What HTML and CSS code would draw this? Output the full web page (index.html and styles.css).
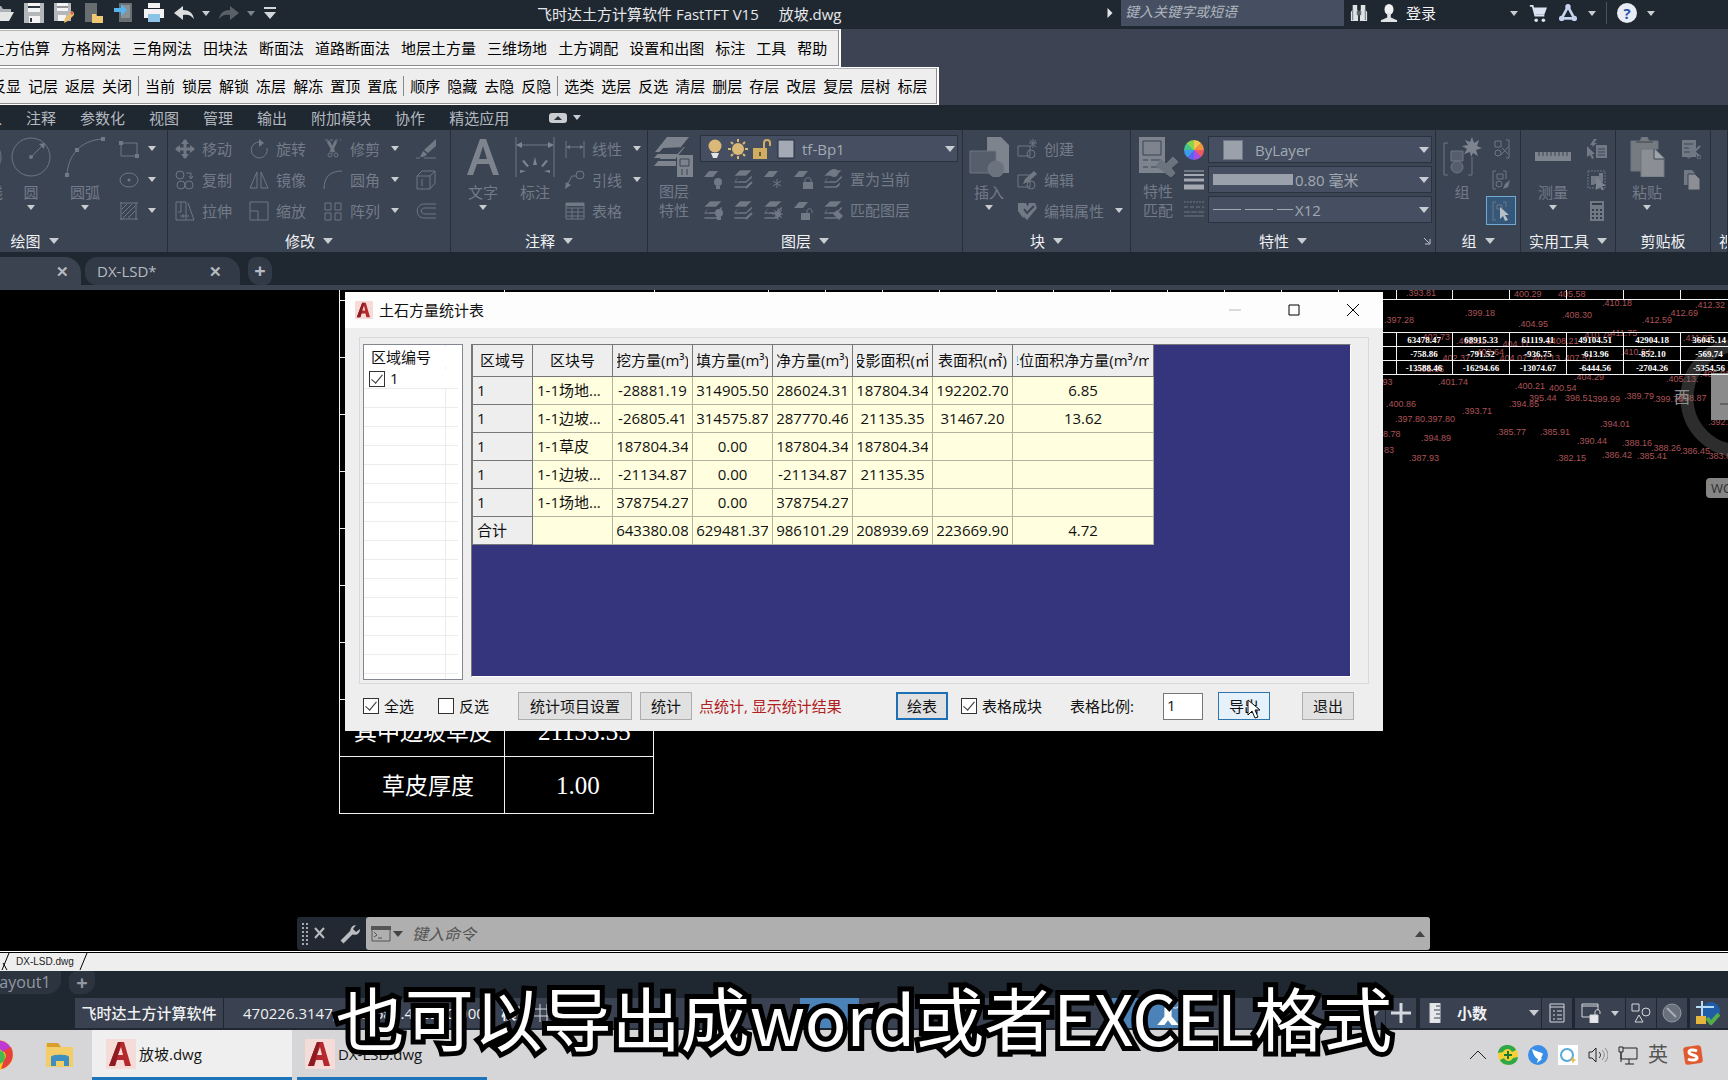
FILE: index.html
```html
<!DOCTYPE html>
<html lang="zh-CN">
<head>
    <meta charset="UTF-8">
    <meta name="viewport" content="width=device-width, initial-scale=1.0">
    <title>飞时达土方计算软件 FastTFT V15</title>
    <link rel="stylesheet" href="styles.css">
</head>
<body>
    <svg class="defs" aria-hidden="true">
        <symbol id="layers" viewBox="0 0 20 20"><path d="M7 1h12l-6 6H1zM6 7l-5 5h12l6-6v3l-6 5H1M6 12l-5 5h12l4-4v3l-3 3H1v-2" fill="currentColor" stroke="#3b4453" stroke-width=".6"/></symbol>
        <symbol id="sheet" viewBox="0 0 20 20"><path d="M6 2h9l-5 6H1z" fill="currentColor"/></symbol>
        <symbol id="acad" viewBox="0 0 30 30"><rect width="30" height="30" fill="#f6dcd8"/><path d="M3 27 12 3h6l7 24h-6l-1.500-6H11l-2 6zM12 16h5l-2-8z" fill="#b5282d"/><path d="M3 27 12 3h3L9 27z" fill="#8d1b22"/></symbol>
    </svg>

    <header class="titlebar">
        <div class="quick">
            <svg viewBox="0 0 20 20" class="open"><path d="M0 3h7l2 3h8v3H5L1 18H0z" fill="#aeb2b6"/><path d="M5 9h15l-5 9H0z" fill="#e4e5e5"/></svg>
            <svg viewBox="0 0 20 20"><path d="M0 0h20v20H0z" fill="#b4b8bb"/><path d="M4 0h12v9H4zM5 13h11v7H5z" fill="#f4f4f4"/><path d="M4 4h12M7 15v4" stroke="#30383f" stroke-width="2"/></svg>
            <svg viewBox="0 0 20 20"><path d="M0 0h17v18H0z" fill="#b4b8bb"/><path d="M3 0h11v8H3zM4 12h8v6H4z" fill="#f4f4f4"/><path d="M3 4h11" stroke="#30383f"/><path d="m10 20 1-5 7-7 3 3-7 7z" fill="#e9bd6d"/><path d="m16 10 2-2 2 2-2 2z" fill="#d36a54"/></svg>
            <svg viewBox="0 0 20 20"><path d="M1 0h12v19H1z" fill="#686d70"/><path d="M8 11h4l1 2h6v7H8z" fill="#f0c874"/></svg>
            <svg viewBox="0 0 20 20"><path d="M5 0h13v19H5z" fill="#696f73"/><path d="M7 2h9v13H7z" fill="#8a9195"/><path d="M0 5h7V1l6 6-6 6V9H0z" fill="#57b4ec"/></svg>
            <svg viewBox="0 0 20 20"><path d="M4 0h12v5H4zM0 6h20v9H0z" fill="#f2f2f2"/><path d="M4 11h12v8H4z" fill="#8cc4e8"/></svg>
            <svg viewBox="0 0 20 20"><path d="M0 10 9 3v4c6 0 10 3 11 9-3-4-6-5-11-4v5z" fill="#dcdedf"/></svg>
            <i class="caret"></i>
            <svg viewBox="0 0 20 20"><path d="M20 10 11 3v4C5 7 1 10 0 16c3-4 6-5 11-4v5z" fill="#596068"/></svg>
            <i class="caret dim"></i>
            <svg viewBox="0 0 20 20" class="more"><path d="M4 4h12v2H4zM4 9h12l-6 7z" fill="#d4d7da"/></svg>
        </div>
        <h1>飞时达土方计算软件 FastTFT V15 <span>放坡.dwg</span></h1>
        <div class="account">
            <svg viewBox="0 0 8 12" class="tri"><path d="M1 0v12l6-6z" fill="#e2e4e6"/></svg>
            <input type="text" class="search" placeholder="键入关键字或短语" aria-label="搜索">
            <svg viewBox="0 0 20 20"><path d="M3 1h5v5l1 3v10H1V9l2-3zM12 1h5v5l2 3v10h-8V9l1-3z" fill="#dfe3e6"/><path d="M8 8h4v4H8zM3 6v12M17 6v12" fill="#5b646e" stroke="#5b646e"/></svg>
            <a href="#"><svg viewBox="0 0 20 20"><ellipse cx="10" cy="6" rx="5" ry="6" fill="#f0f1f2"/><path d="M8 10h4v5l7 3v2H1v-2l7-3z" fill="#dfe3e6"/></svg>登录</a>
            <i class="caret login"></i>
            <svg viewBox="0 0 20 20"><path d="M1 2h3l3 11h10" fill="none" stroke="#dbe3f3" stroke-width="2"/><path d="M5 4h15l-3 8H7z" fill="#dbe3f3"/><circle cx="8" cy="18" r="2" fill="#dbe3f3"/><circle cx="16" cy="18" r="2" fill="#dbe3f3"/></svg>
            <svg viewBox="0 0 20 20"><path d="M10 3 3 16h14z" fill="none" stroke="#c5d3ef" stroke-width="3"/><circle cx="10" cy="3" r="3" fill="#c5d3ef"/><circle cx="3" cy="16" r="3" fill="#c5d3ef"/><circle cx="17" cy="16" r="3" fill="#c5d3ef"/></svg>
            <i class="caret"></i>
            <span class="vline"></span>
            <span class="help">?</span>
            <i class="caret"></i>
        </div>
    </header>

    <nav class="menus">
        <div class="menu main-menu">
            <a href="#">土方估算</a><a href="#">方格网法</a><a href="#">三角网法</a><a href="#">田块法</a><a href="#">断面法</a><a href="#">道路断面法</a><a href="#">地层土方量</a><a href="#">三维场地</a><a href="#">土方调配</a><a href="#">设置和出图</a><a href="#">标注</a><a href="#">工具</a><a href="#">帮助</a>
        </div>
        <div class="menu layer-menu">
            <div><a href="#">反显</a><a href="#">记层</a><a href="#">返层</a><a href="#">关闭</a></div>
            <div><a href="#">当前</a><a href="#">锁层</a><a href="#">解锁</a><a href="#">冻层</a><a href="#">解冻</a><a href="#">置顶</a><a href="#">置底</a></div>
            <div><a href="#">顺序</a><a href="#">隐藏</a><a href="#">去隐</a><a href="#">反隐</a></div>
            <div><a href="#">选类</a><a href="#">选层</a><a href="#">反选</a><a href="#">清层</a><a href="#">删层</a><a href="#">存层</a><a href="#">改层</a><a href="#">复层</a><a href="#">层树</a><a href="#">标层</a></div>
        </div>
    </nav>

    <nav class="ribbon-tabs">
        <a href="#">插入</a><a href="#">注释</a><a href="#">参数化</a><a href="#">视图</a><a href="#">管理</a><a href="#">输出</a><a href="#">附加模块</a><a href="#">协作</a><a href="#">精选应用</a>
        <svg viewBox="0 0 18 10"><rect width="18" height="10" rx="3" fill="#c9ccd0"/><path d="m5 7 4-4 4 4z" fill="#2b333d"/></svg>
        <i class="caret"></i>
    </nav>

    <section class="ribbon">
        <div class="panel draw">
            <div class="tools">
                <button class="big cut"><svg viewBox="0 0 40 40"><circle cx="20" cy="20" r="18"/></svg>线</button>
                <button class="big"><svg viewBox="0 0 40 40"><circle cx="20" cy="20" r="19"/><path d="m20 20 12-12"/><circle cx="20" cy="20" r="2" class="f"/><path d="m34 6-1 6-5-5z" class="f"/></svg>圆<i class="caret"></i></button>
                <button class="big"><svg viewBox="0 0 40 40"><path d="M2 38C3 19 15 3 38 2"/><path d="M0 36h4v4H0zM10 11h4v4h-4zM36 0h4v4h-4z" class="f"/></svg>圆弧<i class="caret"></i></button>
                <div class="stack icons">
                    <button><svg viewBox="0 0 20 20"><path d="M2 4h16v13H2z"/><path d="M0 2h4v4H0zM16 15h4v4h-4z" class="f"/></svg><i class="caret"></i></button>
                    <button><svg viewBox="0 0 20 20"><ellipse cx="10" cy="10" rx="9" ry="7"/><circle cx="10" cy="10" r="1.500" class="f"/></svg><i class="caret"></i></button>
                    <button><svg viewBox="0 0 20 20"><path d="M1 2h18M1 18h18M2 1v18M17 1v18M3 8l5-5M3 13 13 3M4 17 16 5M9 17l7-7"/></svg><i class="caret"></i></button>
                </div>
            </div>
            <h2>绘图<i class="caret"></i></h2>
        </div>

        <div class="panel modify">
            <div class="tools">
                <div class="stack">
                    <button><svg viewBox="0 0 20 20"><path d="M10 1v18M1 10h18" stroke-width="3"/><path d="m10 0 4 5H6zM10 20l4-5H6zM0 10l5-4v8zM20 10l-5-4v8z" class="f"/></svg>移动</button>
                    <button><svg viewBox="0 0 20 20"><circle cx="5" cy="5" r="4"/><circle cx="6" cy="15" r="4"/><circle cx="14" cy="15" r="4"/><path d="M11 3h5v5M14 6l2 3 2-3"/></svg>复制</button>
                    <button><svg viewBox="0 0 20 20"><path d="M1 1h10v18H1zM13 2l6 17h-8M6 1v10H3m11 4H5m3-2v4"/></svg>拉伸</button>
                </div>
                <div class="stack">
                    <button><svg viewBox="0 0 20 20"><path d="M11 3a8 8 0 1 0 7 6"/><path d="m10 0 5 4-5 4z" class="f"/></svg>旋转</button>
                    <button><svg viewBox="0 0 20 20"><path d="M8 2v16H1zM12 2v16h7z"/></svg>镜像</button>
                    <button><svg viewBox="0 0 20 20"><path d="M1 1h18v18H1zM1 10h8v9"/></svg>缩放</button>
                </div>
                <div class="stack">
                    <button><svg viewBox="0 0 20 20"><path d="M2 1h16" stroke-dasharray="3 2"/><path d="M5 2l6 11M13 2 8 13" stroke-width="3"/><circle cx="7" cy="16" r="2"/><circle cx="13" cy="16" r="2"/></svg>修剪<i class="caret"></i></button>
                    <button><svg viewBox="0 0 20 20"><path d="M1 19C1 7 7 1 19 1"/></svg>圆角<i class="caret"></i></button>
                    <button><svg viewBox="0 0 20 20"><path d="M2 2h6v7H2zM12 2h6v7h-6zM2 12h6v7H2zM12 12h6v7h-6z"/></svg>阵列<i class="caret"></i></button>
                </div>
                <div class="stack">
                    <button><svg viewBox="0 0 20 20"><path d="M20 0 8 11l4 3 8-7zM7 12l4 3c-2 3-5 3-7 3z" class="f"/><path d="M0 19h4M8 19h12"/></svg></button>
                    <button><svg viewBox="0 0 20 20"><path d="M1 6h13v13H1zM1 6l5-5h13l-5 5M19 1v12l-5 6M6 9v7"/></svg></button>
                    <button><svg viewBox="0 0 20 20"><path d="M20 3H8C-1 3-1 17 8 17h12M20 7H9c-5 0-5 6 0 6h11"/></svg></button>
                </div>
            </div>
            <h2>修改<i class="caret"></i></h2>
        </div>

        <div class="panel annotate">
            <div class="tools">
                <button class="big"><svg viewBox="0 0 40 40"><path d="M4 38 17 2h6l13 36h-6l-4-11H14l-4 11zM16 22h8L20 9z" class="lt"/></svg>文字<i class="caret"></i></button>
                <button class="big"><svg viewBox="0 0 40 40"><path d="M1 0v40M39 0v40M2 8h36"/><path d="m1 8 6-3v6zM39 8l-6-3v6zM18 28l2-8 2 8zM12 30l-5-6 2-1 5 6zM28 30l5-6-2-1-5 6zM11 34l-6-1v3zM29 34l6-1v3z" class="lt"/></svg>标注</button>
                <div class="stack">
                    <button><svg viewBox="0 0 20 20"><path d="M1 2v17M19 2v17M2 8h16"/><path d="m1 8 4-2v4zM19 8l-4-2v4z" class="f"/></svg>线性<i class="caret"></i></button>
                    <button><svg viewBox="0 0 20 20"><circle cx="15" cy="5" r="4"/><path d="M11 6H7L2 15"/><path d="m0 19 1-7 5 3z" class="f"/></svg>引线<i class="caret"></i></button>
                    <button><svg viewBox="0 0 20 20"><path d="M1 2h18v16H1zM1 7h18M1 11h18M1 15h18M7 7v11M13 7v11"/><path d="M1 2h18v3H1z" class="f"/></svg>表格</button>
                </div>
            </div>
            <h2>注释<i class="caret"></i></h2>
        </div>

        <div class="panel layer">
            <div class="tools">
                <button class="big two"><svg viewBox="0 0 40 40"><path d="M13 0h22L23 15H1zM9 11 0 21h22l9-11M9 18l-9 11h22v-9" class="lt"/><path d="M1 16h22L34 4M1 23h21" stroke="#3b4453" stroke-width="2"/><path d="M23 18h16v22H23z" class="lt"/><path d="M26 22h9v7h-9zM28 32v6M33 32v6" stroke="#3b4453"/></svg>图层<br>特性</button>
                <div class="layer-rows">
                    <div class="drop layer-drop">
                        <svg viewBox="0 0 88 20"><circle cx="8" cy="7" r="6.500" fill="#d9b878"/><path d="M4 14h8l-2 5H6z" fill="#e3e4e6"/><circle cx="31" cy="10" r="6" fill="#d9b878"/><path d="M31 0v3M31 17v3M21 10h3M38 10h3M24 3l2 2M36 15l2 2M24 17l2-2M36 5l2-2" stroke="#d9b878" stroke-width="2"/><path d="M46 9h14v11H46z" fill="#cfae62"/><path d="M57 9V4c0-4 6-4 6 0v3" fill="none" stroke="#cfae62" stroke-width="2"/><path d="M53 13v4" stroke="#6a5a37" stroke-width="2"/><path d="M71 1h16v18H71z" fill="#a3a9b5" stroke="#262f3b"/></svg>
                        <select aria-label="图层"><option>tf-Bp1</option></select>
                    </div>
                    <div class="row">
                        <svg viewBox="0 0 20 20"><use href="#sheet"/><circle cx="15" cy="13" r="4" class="f"/><path d="M13 17h4v3h-4z" class="f"/></svg>
                        <svg viewBox="0 0 20 20"><use href="#layers"/><path d="m13 19 6-6" stroke-width="2"/></svg>
                        <svg viewBox="0 0 20 20"><use href="#sheet"/><path d="M14 10v9M10 12l8 5M10 17l8-5"/></svg>
                        <svg viewBox="0 0 20 20"><use href="#sheet"/><path d="M10 13h10v7H10z" class="f"/><path d="M12 13v-2c0-3 6-3 6 0v2"/></svg>
                        <svg viewBox="0 0 20 20"><use href="#layers"/><circle cx="11" cy="4" r="4" class="f"/></svg>
                        <button>置为当前</button>
                    </div>
                    <div class="row">
                        <svg viewBox="0 0 20 20"><use href="#layers"/><circle cx="16" cy="13" r="4" class="f"/><path d="M14 17h4v3h-4z" class="f"/></svg>
                        <svg viewBox="0 0 20 20"><use href="#layers"/><path d="m13 19 6-6" stroke-width="2"/></svg>
                        <svg viewBox="0 0 20 20"><use href="#layers"/><circle cx="15" cy="14" r="3" class="f"/><path d="M15 8v12M9 14h11M11 10l8 8M19 10l-8 8"/></svg>
                        <svg viewBox="0 0 20 20"><use href="#sheet"/><path d="M8 13h9v7H8z" class="f"/><path d="M14 13v-2c0-3 5-3 5 0v2"/></svg>
                        <svg viewBox="0 0 20 20"><use href="#layers"/><path d="m10 14 4-4 6 6-4 4z" class="f"/></svg>
                        <button>匹配图层</button>
                    </div>
                </div>
            </div>
            <h2>图层<i class="caret"></i></h2>
        </div>

        <div class="panel block">
            <div class="tools">
                <button class="big"><svg viewBox="0 0 40 40"><path d="M18 0h14l8 8v28H18z" class="lt"/><path d="M1 14h26v22H1z" fill="#555e6a"/><circle cx="27" cy="32" r="8" fill="#6b737e"/></svg>插入<i class="caret"></i></button>
                <div class="stack">
                    <button><svg viewBox="0 0 20 20"><path d="M1 7h12v10H1z"/><circle cx="14" cy="15" r="4"/><path d="M16 0v9M12 4h8M13 1l6 7M19 1l-6 7"/></svg>创建</button>
                    <button><svg viewBox="0 0 20 20"><path d="M1 5h12v12H1z"/><circle cx="14" cy="15" r="4"/><path d="m6 14 2-5 9-8 3 3-9 8z" class="f"/></svg>编辑</button>
                    <button><svg viewBox="0 0 20 20"><path d="M1 2h8l3 6-6 9-5-7zM12 2h6l2 5-10 12-3-3z" class="f"/><path d="m7 8 3 4 7-7" stroke="#3b4453" stroke-width="2"/></svg>编辑属性<i class="caret"></i></button>
                </div>
            </div>
            <h2>块<i class="caret"></i></h2>
        </div>

        <div class="panel props">
            <div class="tools">
                <button class="big two"><svg viewBox="0 0 40 40"><path d="M1 0h26v36H1z" class="lt"/><path d="M5 4h18v14H5zM5 23h5M13 23h10M5 30h5M13 30h8" stroke="#3b4453"/><path d="m18 29 5-7 5 5 7-7 5 5-7 6 4 5-4 4z" fill="#6b737e"/></svg>特性<br>匹配</button>
                <div class="prop-rows">
                    <label><span class="wheel"></span><span class="drop"><span class="swatch"></span><select aria-label="颜色"><option>ByLayer</option></select></span></label>
                    <label><svg viewBox="0 0 20 20"><path d="M0 1h20" stroke="#a4a9b1"/><path d="M0 5h20" stroke="#a4a9b1" stroke-width="2"/><path d="M0 10h20" stroke="#a4a9b1" stroke-width="3"/><path d="M0 17h20" stroke="#a4a9b1" stroke-width="5"/></svg><span class="drop"><span class="weight"></span><select aria-label="线宽"><option>0.80 毫米</option></select></span></label>
                    <label><svg viewBox="0 0 20 20"><path d="M0 2h20" stroke-dasharray="2 1"/><path d="M0 7h20" stroke-dasharray="4 2"/><path d="M0 12h20" stroke-dasharray="6 1"/><path d="M0 16h20"/></svg><span class="drop"><span class="dashes"></span><select aria-label="线型"><option>X12</option></select></span></label>
                </div>
            </div>
            <h2>特性<i class="caret"></i><svg class="launch" viewBox="0 0 8 8"><path d="m1 1 5 5M7 2v5H2" stroke="#c4c8ce"/></svg></h2>
        </div>

        <div class="panel group">
            <div class="tools">
                <button class="big"><svg viewBox="0 0 40 40"><path d="M6 6H2v32h4M26 38h4V20"/><path d="M9 14h12v10H9z" fill="#555e6a"/><circle cx="15" cy="30" r="6" fill="#555e6a"/><path d="m30 0 2 6 5-3-2 6 5 2-6 2 2 6-5-3-2 4-1-5-6 2 3-5-5-3 6-1-3-5 5 2z" class="lt"/></svg>组</button>
                <div class="stack icons">
                    <button><svg viewBox="0 0 20 20"><path d="M4 2h6v6H4zM15 1h3v18h-3M11 9l6 6M17 8l-7 8"/><circle cx="7" cy="14" r="3"/></svg></button>
                    <button><svg viewBox="0 0 20 20"><path d="M5 1H2v18h3M12 1h3v8M6 4h6v5H6z"/><circle cx="8" cy="14" r="3"/><path d="m12 19 2-5 5-4-2 7z" class="f"/></svg></button>
                    <button class="on"><svg viewBox="0 0 20 20"><path d="M5 1H2v18h3M12 1h3v5M6 4h5v4H6z"/><path d="m9 6 9 8h-4l3 5-3 1-2-5-3 3z" fill="#b8bec6" stroke="none"/></svg></button>
                </div>
            </div>
            <h2>组<i class="caret"></i></h2>
        </div>

        <div class="panel utils">
            <div class="tools">
                <button class="big"><svg viewBox="0 0 40 40"><path d="M2 15h36v9H2z" class="lt"/><path d="M6 15v4M10 15v4M14 15v4M18 15v4M22 15v4M26 15v4M30 15v4M34 15v4" stroke="#3b4453"/></svg>测量<i class="caret"></i></button>
                <div class="stack icons">
                    <button><svg viewBox="0 0 20 20"><path d="M9 6h11v13H9zM7 0 3 6h3L4 9l6-5H7l3-4zM0 7l8 8H5l2 4-2 1-2-4-3 2z" class="f"/><path d="M11 10h7M11 13h7M11 16h7" stroke="#3b4453"/></svg></button>
                    <button><svg viewBox="0 0 20 20"><path d="M1 1h17v17H1z" stroke-dasharray="2 1"/><path d="M4 6h8V3h4v9h-3l-7 3H4z" class="f"/><path d="m9 7 10 9h-4l2 4-2 1-2-4-4 3z" class="lt"/></svg></button>
                    <button><svg viewBox="0 0 20 20"><path d="M3 0h14v20H3z" class="f"/><path d="M5 3h10M5 9h2M9 9h2M13 9h2M5 13h2M9 13h2M13 13h2M5 17h2M9 17h2M13 17h2" stroke="#333c49" stroke-width="2"/></svg></button>
                </div>
            </div>
            <h2>实用工具<i class="caret"></i></h2>
        </div>

        <div class="panel clip">
            <div class="tools">
                <button class="big"><svg viewBox="0 0 40 40"><path d="M4 4h9l2-4h5l2 4h9v8H14v22H4z" fill="#767b80"/><path d="M9 5h17" stroke="#3b4453"/><path d="M14 12h14l9 9v19H14z" fill="#8b8f94"/><path d="M27 12v10h10" stroke="#3b4453" fill="#a0a4a8"/></svg>粘贴<i class="caret"></i></button>
                <div class="stack icons">
                    <button><svg viewBox="0 0 20 20"><path d="M1 1h14v17H1z" class="f"/><path d="M3 5h9M3 9h6M3 13h6" stroke="#3b4453"/><path d="m7 7 11 10M19 7 9 17" stroke-width="2"/><circle cx="8" cy="17" r="2"/><circle cx="18" cy="18" r="2"/></svg></button>
                    <button><svg viewBox="0 0 20 20"><path d="M3 0h8l3 3v12H3z" class="f"/><path d="M7 4h7l5 5v11H7z" fill="#8b8f94" stroke="#3b4453"/></svg></button>
                </div>
            </div>
            <h2>剪贴板</h2>
        </div>

        <div class="panel view">
            <div class="tools"></div>
            <h2>视图</h2>
        </div>
    </section>

    <div class="doc-tabs">
        <div class="tab current"><button aria-label="关闭">✕</button></div>
        <div class="tab"><a href="#">DX-LSD*</a><button aria-label="关闭">✕</button></div>
        <button class="tab add" aria-label="新建">+</button>
    </div>

    <main class="canvas">
        <svg class="drawing" aria-hidden="true">
            <!-- quantity table on the left -->
            <g class="grid">
                <path d="M339 0v524M504 440v84M653 440v84M339 10h20M339 67h20M339 124h20M339 181h20M339 238h20M339 295h20M339 352h20M339 409h20M339 466h315M339 523h315"/>
                <path d="M504 0v4M654 0v4M768 0v4M825 0v4M882 0v4M939 0v4M996 0v4M1053 0v4M1110 0v4M1167 0v4M1224 0v4M1281 0v4M1338 0v4"/>
            </g>
            <g class="cad">
                <text x="354" y="450">其中边坡草皮</text>
                <text x="538" y="450" class="num">21135.35</text>
                <text x="382" y="504">草皮厚度</text>
                <text x="556" y="504" class="num">1.00</text>
            </g>
            <!-- elevation points -->
            <g class="pts">
                <text x="1406" y="6">.393.81</text><text x="1514" y="7">400.29</text><text x="1558" y="7">405.58</text><text x="1602" y="16">.410.18</text><text x="1695" y="18">.412.32</text>
                <text x="1384" y="33">.397.28</text><text x="1465" y="26">.399.18</text><text x="1562" y="28">.408.30</text><text x="1518" y="37">.404.95</text><text x="1642" y="33">.412.59</text><text x="1668" y="26">.412.69</text>
                <text x="1420" y="50">.402.73</text><text x="1582" y="48">.410.78</text><text x="1608" y="46">.411.75</text><text x="1683" y="51">.411.87</text><text x="1456" y="54">.402.81</text><text x="1500" y="57">.404.11</text><text x="1546" y="54">3408.21</text>
                <text x="1474" y="65">.402.64</text><text x="1621" y="65">.410.54</text><text x="1440" y="71">.402.37</text><text x="1497" y="71">.404.07</text><text x="1530" y="71">.407.13</text><text x="1562" y="71">.407.57</text><text x="1414" y="82">.405.35</text><text x="1700" y="87">.405.81</text>
                <text x="1574" y="90">.404.29</text><text x="1666" y="92">.405.13.</text><text x="1380" y="95">.93</text><text x="1438" y="95">.401.74</text><text x="1515" y="99">.400.21</text><text x="1549" y="101">400.54</text>
                <text x="1529" y="111">395.44</text><text x="1565" y="111">398.51</text><text x="1590" y="112">.399.99</text><text x="1624" y="109">.389.79</text><text x="1653" y="112">.399.78</text><text x="1679" y="111">398.87</text>
                <text x="1386" y="117">.400.86</text><text x="1509" y="117">.394.85</text><text x="1462" y="124">.393.71</text><text x="1395" y="132">.397.80</text><text x="1425" y="132">.397.80</text><text x="1600" y="137">.394.01</text><text x="1708" y="135">.392.85</text>
                <text x="1383" y="147">8.78</text><text x="1421" y="151">.394.89</text><text x="1496" y="145">.385.77</text><text x="1540" y="145">.385.91</text><text x="1577" y="154">.390.44</text><text x="1622" y="156">.388.16</text><text x="1651" y="161">.388.26</text><text x="1680" y="164">.386.45</text>
                <text x="1384" y="163">83</text><text x="1409" y="171">.387.93</text><text x="1556" y="171">.382.15</text><text x="1602" y="168">.386.42</text><text x="1637" y="169">.385.41</text><text x="1706" y="169">.383.60</text>
            </g>
            <!-- view cube -->
            <circle cx="1740" cy="108" r="53" class="ring"/>
            <rect x="1711" y="83" width="40" height="47" class="cube"/>
            <path d="M1720 114h20" stroke="#3f3f3f"/>
            <text x="1674" y="113" class="west">西</text>
            <rect x="1706" y="188" width="60" height="20" rx="4" class="wcs"/>
            <text x="1711" y="203" class="wcs-text">WCS</text>
            <!-- net volume table on the right -->
            <g class="grid">
                <path d="M1383 9h345M1383 42h345M1383 56h345M1383 70h345M1383 84h345"/>
                <path d="M1396 0v9M1452 0v9M1509 0v9M1566 0v9M1623 0v9M1680 0v9M1396 42v42M1452 42v42M1509 42v42M1566 42v42M1623 42v42M1680 42v42"/>
            </g>
            <g class="vals">
                <text x="1424" y="53">63478.47</text><text x="1481" y="53">68915.33</text><text x="1538" y="53">61119.41</text><text x="1595" y="53">49104.51</text><text x="1652" y="53">42904.18</text><text x="1709" y="53">36045.14</text>
                <text x="1424" y="67">-758.86</text><text x="1481" y="67">-791.52</text><text x="1538" y="67">-936.75</text><text x="1595" y="67">-613.96</text><text x="1652" y="67">-852.10</text><text x="1709" y="67">-569.74</text>
                <text x="1424" y="81">-13588.46</text><text x="1481" y="81">-16294.66</text><text x="1538" y="81">-13074.67</text><text x="1595" y="81">-6444.56</text><text x="1652" y="81">-2704.26</text><text x="1709" y="81">-5354.56</text>
            </g>
        </svg>

        <section class="dialog">
            <header>
                <svg class="logo"><use href="#acad"/></svg>
                <h2>土石方量统计表</h2>
                <button disabled aria-label="最小化"><svg viewBox="0 0 12 12"><path d="M0 6h12"/></svg></button>
                <button aria-label="最大化"><svg viewBox="0 0 12 12"><path d="M1 1h10v10H1z"/></svg></button>
                <button aria-label="关闭"><svg viewBox="0 0 12 12"><path d="m0 0 12 12M12 0 0 12"/></svg></button>
            </header>
            <div class="frame">
                <div class="list">
                    <div class="list-head">区域编号</div>
                    <label class="check"><input type="checkbox" checked>1</label>
                </div>
                <div class="sheet">
                    <table>
                        <colgroup><col class="c1"><col class="c2"><col class="c2"><col class="c2"><col class="c2"><col class="c2"><col class="c2"><col class="c3"></colgroup>
                        <thead>
                            <tr><th><div>区域号</div></th><th><div>区块号</div></th><th><div>挖方量(m³)</div></th><th><div>填方量(m³)</div></th><th><div>净方量(m³)</div></th><th><div>投影面积(㎡)</div></th><th><div>表面积(㎡)</div></th><th><div>单位面积净方量(m³/m²)</div></th></tr>
                        </thead>
                        <tbody>
                            <tr><th>1</th><td class="name">1-1场地...</td><td><div>-28881.19</div></td><td><div>314905.50</div></td><td><div>286024.31</div></td><td><div>187804.34</div></td><td><div>192202.70</div></td><td><div>6.85</div></td></tr>
                            <tr><th>1</th><td class="name">1-1边坡...</td><td><div>-26805.41</div></td><td><div>314575.87</div></td><td><div>287770.46</div></td><td><div>21135.35</div></td><td><div>31467.20</div></td><td><div>13.62</div></td></tr>
                            <tr><th>1</th><td class="name">1-1草皮</td><td><div>187804.34</div></td><td><div>0.00</div></td><td><div>187804.34</div></td><td><div>187804.34</div></td><td></td><td></td></tr>
                            <tr><th>1</th><td class="name">1-1边坡...</td><td><div>-21134.87</div></td><td><div>0.00</div></td><td><div>-21134.87</div></td><td><div>21135.35</div></td><td></td><td></td></tr>
                            <tr><th>1</th><td class="name">1-1场地...</td><td><div>378754.27</div></td><td><div>0.00</div></td><td><div>378754.27</div></td><td></td><td></td><td></td></tr>
                            <tr><th>合计</th><td></td><td><div>643380.08</div></td><td><div>629481.37</div></td><td><div>986101.29</div></td><td><div>208939.69</div></td><td><div>223669.90</div></td><td><div>4.72</div></td></tr>
                        </tbody>
                    </table>
                </div>
            </div>
            <footer>
                <label class="check all"><input type="checkbox" checked>全选</label>
                <label class="check invert"><input type="checkbox">反选</label>
                <button class="wide">统计项目设置</button>
                <button>统计</button>
                <span class="hint">点统计, 显示统计结果</span>
                <button class="default">绘表</button>
                <label class="check as-block"><input type="checkbox" checked>表格成块</label>
                <label class="scale">表格比例:<input type="text" value="1"></label>
                <button class="hover">导出<svg class="pointer" viewBox="0 0 14 20"><path d="M1 1v15l4-4 3 7 3-1-3-7h5z" fill="#fff" stroke="#111"/></svg></button>
                <button class="exit">退出</button>
            </footer>
        </section>

        <div class="command">
            <svg viewBox="0 0 8 24" class="grip"><path d="M2 1v22M6 1v22"/></svg>
            <button aria-label="关闭"><svg viewBox="0 0 14 14"><path d="m2 2 9 10M11 2 2 12" stroke="#b9bdc2" stroke-width="2"/></svg></button>
            <button aria-label="自定义"><svg viewBox="0 0 20 20" class="wrench"><path d="M2 18 12 8" stroke="#b9bdc2" stroke-width="4"/><path d="M11 10c-2-5 1-9 5-9l-3 4 3 3 4-3c0 5-4 7-9 5z" fill="#b9bdc2"/></svg></button>
            <div class="prompt">
                <svg viewBox="0 0 20 16"><path d="M1 1h18v14H1z" fill="none" stroke="#555"/><path d="M0 0h20v4H0z" fill="#555"/><path d="m3 6 3 3-3 2M7 12h4" fill="none" stroke="#555"/></svg>
                <i class="caret"></i>
                <input type="text" placeholder="键入命令" aria-label="命令">
                <i class="caret up"></i>
            </div>
        </div>
    </main>

    <div class="sheet-tabs">
        <svg viewBox="0 0 90 19"><path d="M2 18 9 1M80 18 87 1M3 11l4 7" fill="none" stroke="#000"/></svg>
        <a href="#">DX-LSD.dwg</a>
    </div>
    <div class="layout-tabs">
        <a href="#">Layout1</a><button aria-label="新建布局">+</button>
    </div>

    <div class="status">
        <span class="cell app">飞时达土方计算软件</span>
        <span class="cell coords">470226.3147, 2385683.4682, 0.0000 &nbsp;<b>模型</b></span>
        <span class="cell toggles">
            <svg viewBox="0 0 20 20"><path d="M6 1v18M13 1v18M0 6h20M0 13h20"/></svg>
            <i class="lit one"></i><i class="lit two"></i>
            <svg viewBox="0 0 20 20" class="lit person"><path d="M10 0 7 6v7l-6 7h6l3-4 3 4h6l-6-7V6z" fill="#fff" stroke="none"/><circle cx="16" cy="3" r="3"/></svg>
            <i class="caret last"></i>
        </span>
        <button class="plus" aria-label="添加"><svg viewBox="0 0 20 20"><path d="M10 0v20M0 10h20" stroke-width="3"/></svg></button>
        <div class="units">
            <svg viewBox="0 0 12 20"><path d="M1 0h10v20H1z" fill="#e4e6e9"/><path d="M7 3h4M5 7h6M7 11h4M5 15h6" stroke="#3a4150"/></svg>
            <span class="drop"><select aria-label="单位"><option>小数</option></select></span>
        </div>
        <button><svg viewBox="0 0 20 20"><path d="M3 1h14v18H3zM3 4h14M6 8h2M10 8h5M6 12h2M10 12h5M6 16h2M10 16h5"/></svg></button>
        <button class="lock"><svg viewBox="0 0 20 20"><path d="M9 14H1V1h16v6M1 3h16"/><path d="M9 12h8v8H9z" fill="#e4e6e9"/><path d="M14 12V9c0-3 5-3 5 0v2"/></svg><i class="caret"></i></button>
        <button><svg viewBox="0 0 20 20"><path d="M1 1h7v7H1zM8 12l4 7H4z"/><circle cx="15" cy="9" r="4"/></svg></button>
        <button><svg viewBox="0 0 20 20"><circle cx="10" cy="10" r="9" fill="#69717c" stroke="#9299a3"/><path d="m5 5 9 9" stroke-width="2" stroke="#a9afb7"/></svg></button>
        <button class="globe"><svg viewBox="0 0 24 24"><circle cx="15" cy="10" r="9" fill="#205da8" stroke="none"/><path d="M6 0v17M0 6h18" stroke="#b8dcf6" stroke-width="2"/><path d="M0 15h10v8H0z" fill="#e5b63e" stroke="none"/><path d="m11 17 4 5 8-9" stroke="#55ad4a" stroke-width="4"/></svg></button>
    </div>

    <footer class="taskbar">
        <a href="#" class="app-icon"><svg viewBox="0 0 30 30"><circle cx="15" cy="15" r="15" fill="#f5ce22"/><path d="M2 8a15 15 0 0 1 26 0l-8 4a8 8 0 0 0-11-2z" fill="#bf3ad4"/><path d="M28 7c6 13-4 21-10 22l3-9c3-3 2-7-1-9z" fill="#e8403c"/><circle cx="15" cy="17" r="7" fill="#43bb50"/></svg></a>
        <a href="#" class="folder"><svg viewBox="0 0 28 24"><path d="M0 0h12l3 4h12v20H0z" fill="#f3cd67"/><path d="M1 0h11l3 4H1z" fill="#d99f2d"/><path d="M5 23v-9c0-3 18-3 18 0v9h-5v-5h-8v5z" fill="#3d8fc0"/></svg></a>
        <a href="#" class="task active"><svg><use href="#acad"/></svg>放坡.dwg</a>
        <a href="#" class="task"><svg><use href="#acad"/></svg>DX-LSD.dwg</a>
        <div class="tray">
            <svg viewBox="0 0 20 20"><path d="m2 14 8-8 8 8"/></svg>
            <svg viewBox="0 0 20 20"><circle cx="10" cy="10" r="10" fill="#f7d232" stroke="none"/><path d="M0 8C1-2 15-2 18 5l-4 2C12 3 7 3 5 7zM20 12c-1 10-15 10-18 3l4-2c2 4 7 4 9 0z" fill="#2fa84a" stroke="none"/><path d="M10 6v8M6 10h8" stroke="#187b35" stroke-width="2"/></svg>
            <svg viewBox="0 0 20 20"><circle cx="10" cy="10" r="10" fill="#3a8ee8" stroke="none"/><path d="M4 4c5 3 9 3 11 5l-2 4 1 1-5 4 1-4c-3-1-5-5-6-10z" fill="#fff" stroke="none"/></svg>
            <svg viewBox="0 0 20 20"><path d="M0 0h20v20H0z" fill="#fff" stroke="none"/><circle cx="9" cy="10" r="6" stroke="#57a7dc" stroke-width="2"/><path d="m15 11 1 3 3 1-3 1-1 3-1-3-3-1 3-1z" fill="#e5bb59" stroke="none"/></svg>
            <svg viewBox="0 0 20 20"><path d="M1 7h3l4-4v14l-4-4H1zM11 7c2 2 2 4 0 6"/><path d="M14 5c3 3 3 7 0 10M17 3c4 5 4 9 0 14" stroke="#888"/></svg>
            <svg viewBox="0 0 20 20"><path d="M5 3h14v11H3V8M7 19h9M11 14v5M1 2h4v5H1zM3 7v10"/></svg>
            <span>英</span>
            <svg viewBox="0 0 20 20" class="sogou"><rect x="1" y="1" width="18" height="18" rx="3" fill="#e05a30" stroke="none" transform="rotate(-8 10 10)"/><path d="M14 6c-4-2-8-1-8 1 0 4 8 2 8 6 0 2-5 3-9 1" stroke="#fff" stroke-width="3"/></svg>
        </div>
    </footer>

    <p class="subtitle">也可以导出成word或者EXCEL格式</p>
</body>
</html>
```
FILE: styles.css
```css
* {
    box-sizing: border-box;
}
body {
    margin: 0;
    height: 100vh;
    display: flex;
    flex-direction: column;
    overflow: hidden;
    background: #1f2730;
    font-family: "Open Sans", "Noto Sans CJK SC", sans-serif;
    font-size: 15px;
    line-height: 20px;
    color: #d5d8dc;
    position: relative;
}
a {
    color: inherit;
    text-decoration: none;
    white-space: nowrap;
}
h1, h2 {
    margin: 0;
    font-size: 15px;
    font-weight: normal;
}
button, input, select {
    font: inherit;
    color: inherit;
    border: none;
    background: none;
    padding: 0;
    margin: 0;
    border-radius: 0;
}
svg {
    flex: none;
}
.defs {
    position: absolute;
    width: 0;
    height: 0;
}
.caret {
    display: inline-block;
    flex: none;
    border: 4px solid transparent;
    border-top: 5px solid #c9cdd2;
    border-bottom: none;
}
.caret.dim {
    border-top-color: #7d848c;
}

/* title bar */
.titlebar {
    flex: none;
    height: 29px;
    display: flex;
    align-items: flex-start;
    justify-content: space-between;
    position: relative;
}
.quick {
    display: flex;
    align-items: center;
    gap: 10px;
    height: 26px;
}
.quick svg {
    width: 20px;
    height: 20px;
}
.quick .open {
    margin-left: -6px;
}
.quick .caret {
    margin: 0 -1px 0 -2px;
}
.quick .more {
    margin-left: -4px;
}
.titlebar h1 {
    position: absolute;
    left: 537px;
    top: 4px;
    color: #e6e8ea;
    white-space: nowrap;
}
.titlebar h1 span {
    margin-left: 16px;
}
.account {
    display: flex;
    align-items: center;
    height: 26px;
    gap: 10px;
    margin-right: 73px;
}
.account svg {
    width: 20px;
    height: 18px;
}
.account .tri {
    width: 8px;
    height: 10px;
    margin-right: -3px;
}
.account a {
    display: flex;
    align-items: center;
    gap: 7px;
    color: #f2f3f4;
}
.account .login {
    margin-left: 64px;
}
.search {
    width: 223px;
    height: 26px;
    padding: 0 4px 4px;
    margin-right: -5px;
    background: #454f61;
    font-size: 14px;
    font-style: italic;
}
.search::placeholder {
    color: #aeb4be;
}
.vline {
    width: 1px;
    height: 22px;
    background: #4a525c;
}
.help {
    width: 20px;
    height: 20px;
    border-radius: 10px;
    background: #e8ecf4;
    color: #2754a8;
    font-weight: bold;
    text-align: center;
}

/* floating menus */
.menus {
    flex: none;
    height: 76px;
    background: #3d4352;
}
.menu {
    display: flex;
    align-items: center;
    width: max-content;
    height: 38px;
    color: #000;
    background: #eeeeee;
    border: 1px solid #fff;
    border-right: 2px solid #fff;
    box-shadow: inset -1px -1px 0 #8c8c8c, inset 0 1px 0 #b5b5b5;
}
.main-menu {
    gap: 11px;
    margin-left: -11px;
    padding-right: 12px;
}
.layer-menu {
    margin-left: -10px;
    padding-right: 4px;
}
.layer-menu div {
    display: flex;
    gap: 7px;
    padding-right: 6px;
}
.layer-menu div + div {
    border-left: 1px solid #888;
    padding-left: 6px;
}
.ribbon-tabs {
    flex: none;
    height: 25px;
    display: flex;
    align-items: center;
    gap: 24px;
    margin-left: -28px;
    color: #b4b9c0;
}
.ribbon-tabs svg {
    width: 18px;
    height: 10px;
    margin-left: 16px;
}
.ribbon-tabs .caret {
    margin-left: -18px;
}

/* ribbon */
.ribbon {
    flex: none;
    display: grid;
    grid-template-columns: 168px 283px 197px 315px 168px 305px 85px 95px 95px minmax(0, 1fr);
    height: 122px;
    background: #3b4453;
    color: #737b88;
}
.panel {
    display: flex;
    flex-direction: column;
    border-right: 1px solid #262e39;
    overflow: hidden;
    min-width: 0;
}
.panel .tools {
    flex: 1;
    display: flex;
    align-items: flex-start;
    padding-top: 4px;
}
.panel h2 {
    height: 23px;
    display: flex;
    justify-content: center;
    gap: 8px;
    align-items: center;
    color: #f0f1f3;
    white-space: nowrap;
    position: relative;
}
.panel h2 .caret {
    border-width: 5px;
    border-top-width: 6px;
    border-bottom: none;
}
.draw h2 {
    padding-right: 98px;
}
.ribbon svg {
    width: 20px;
    height: 20px;
    fill: none;
    stroke: #6f7783;
    color: #717985;
}
.ribbon svg .f {
    fill: #717985;
    stroke: none;
}
.ribbon svg .lt {
    fill: #7d848e;
    stroke: none;
}
.ribbon use {
    stroke: none;
}
.big {
    display: flex;
    flex-direction: column;
    align-items: center;
    padding-top: 3px;
    line-height: 19px;
    white-space: nowrap;
}
.big svg {
    width: 40px;
    height: 40px;
    margin-bottom: 6px;
}
.big .caret {
    margin-top: 3px;
}
.big.two svg {
    margin-bottom: 5px;
}
.stack {
    display: flex;
    flex-direction: column;
    margin-top: -1px;
}
.stack button {
    display: flex;
    align-items: center;
    height: 31px;
    gap: 7px;
    white-space: nowrap;
}
.stack .caret {
    margin-left: 4px;
}
.stack.icons .caret {
    margin-left: 2px;
}
.draw .tools {
    gap: 14px;
}
.draw .cut {
    width: 11px;
    align-items: flex-end;
    margin-left: -8px;
    margin-right: -6px;
}
.modify .tools {
    padding-left: 7px;
    gap: 17px;
}
.annotate .tools {
    padding-left: 12px;
    gap: 10px;
}
.annotate .big + .big {
    margin-left: 2px;
}
.layer .tools {
    padding: 4px 4px 0 6px;
    gap: 6px;
}
.layer-rows {
    flex: 1;
}
.row {
    display: flex;
    align-items: center;
    gap: 10px;
    height: 31px;
    padding-left: 3px;
}
.row button {
    margin-left: -3px;
}
.drop {
    display: flex;
    align-items: center;
    flex: 1;
    height: 27px;
    background: #454f61;
    border: 1px solid #2a323e;
    position: relative;
}
.drop::after {
    content: "";
    position: absolute;
    right: 2px;
    top: 10px;
    border: 5px solid transparent;
    border-top: 6px solid #c9cdd2;
    border-bottom: none;
    pointer-events: none;
}
.drop select {
    flex: 1;
    min-width: 0;
    height: 100%;
    appearance: none;
    color: #a3a9b3;
}
.layer-drop {
    margin: 1px 0;
}
.ribbon .layer-drop svg {
    width: 88px;
    height: 20px;
    margin: 0 7px 0 6px;
    stroke: none;
}
.block .tools {
    padding-left: 6px;
    gap: 8px;
}
.props .tools {
    padding: 4px 3px 0 7px;
    gap: 6px;
}
.prop-rows {
    flex: 1;
    padding-top: 2px;
    display: flex;
    flex-direction: column;
    gap: 3px;
}
.prop-rows label {
    display: flex;
    align-items: center;
    gap: 4px;
}
.wheel {
    width: 20px;
    height: 20px;
    border-radius: 10px;
    background: conic-gradient(#f2c94c 0 12%, #ef9440 12% 25%, #ec5a62 25% 37%, #a94ee0 37% 50%, #5965ed 50% 62%, #3d9bea 62% 75%, #43c389 75% 87%, #8fd14f 87%);
}
.swatch {
    width: 20px;
    height: 20px;
    margin: 0 12px 0 14px;
    background: #9ba1ab;
    border: 1px solid #707884;
}
.weight {
    width: 80px;
    height: 11px;
    margin: 0 2px 0 4px;
    background: #9ba1ab;
}
.dashes {
    width: 80px;
    height: 1px;
    margin: 0 2px 0 4px;
    background: repeating-linear-gradient(90deg, #a3a9b3 0 28px, transparent 28px 32px);
}
.panel h2 .launch {
    position: absolute;
    right: 4px;
    bottom: 7px;
    width: 8px;
    height: 8px;
}
.group .tools {
    padding-left: 6px;
    gap: 5px;
}
.group .icons button {
    padding: 0 4px;
}
.group .icons .on {
    height: 27px;
    margin-top: 2px;
    background: #35587a;
    outline: 1px solid #6fa9d4;
}
.utils .tools {
    padding-left: 12px;
    gap: 14px;
}
.clip .tools {
    padding-left: 11px;
    gap: 14px;
}
.view h2 {
    justify-content: flex-start;
    padding-left: 8px;
}

/* document tabs */
.doc-tabs {
    flex: none;
    height: 38px;
    padding-top: 5px;
    display: flex;
    gap: 4px;
    border-bottom: 5px solid #3b4250;
}
.tab {
    display: flex;
    justify-content: space-between;
    align-items: center;
    width: 155px;
    padding: 0 18px 0 12px;
    background: #323a47;
    border-radius: 12px 16px 0 12px;
    color: #b6bbc2;
}
.tab.current {
    width: 81px;
    justify-content: flex-end;
    padding-right: 12px;
    background: #3b4250;
    border-radius: 0 16px 0 0;
}
.tab button {
    font-weight: bold;
}
.tab.add {
    width: 24px;
    margin-left: 4px;
    padding: 0;
    justify-content: center;
    border-radius: 8px 12px 8px 12px;
    font-size: 20px;
    font-weight: bold;
}

/* drawing area */
.canvas {
    flex: 1;
    min-height: 0;
    position: relative;
    background: #000;
    overflow: hidden;
}
.drawing {
    display: block;
    width: 100%;
    height: 100%;
    fill: #fff;
}
.grid path {
    fill: none;
    stroke: #f2f2f2;
    stroke-width: 1;
    shape-rendering: crispEdges;
}
.cad {
    font-family: "Noto Sans CJK SC", sans-serif;
    font-size: 23px;
}
.cad .num {
    font-family: "Liberation Serif", serif;
    font-size: 25px;
}
.pts {
    font-family: "Liberation Sans", sans-serif;
    font-size: 9px;
    fill: #ac5358;
}
.vals {
    font-family: "Liberation Serif", serif;
    font-size: 9px;
    font-weight: bold;
    text-anchor: middle;
}
.ring {
    fill: none;
    stroke: #808080;
    stroke-opacity: .35;
    stroke-width: 13;
}
.cube {
    fill: #8a8a8a;
}
.west {
    font-size: 16px;
    fill: #8f8f8f;
}
.wcs {
    fill: #858585;
}
.wcs-text {
    font-size: 13px;
    fill: #2e2e2e;
}

/* statistics dialog */
.dialog {
    position: absolute;
    left: 345px;
    top: 2px;
    width: 1038px;
    padding-bottom: 11px;
    background: #eeeeee;
    color: #111;
}
.dialog header {
    display: flex;
    align-items: center;
    height: 36px;
    padding-left: 10px;
    background: #fdfdfd;
}
.logo {
    width: 18px;
    height: 18px;
    margin-right: 6px;
}
.dialog h2 {
    flex: 1;
}
.dialog header button {
    width: 59px;
    height: 36px;
    padding-right: 2px;
}
.dialog header svg {
    width: 12px;
    height: 12px;
    fill: none;
    stroke: #000;
}
.dialog header .logo {
    width: 18px;
    height: 18px;
    stroke: none;
}
.dialog header button:disabled svg {
    stroke: #b8b8b8;
}
.frame {
    display: flex;
    gap: 8px;
    margin: 9px 14px 8px;
    padding: 6px 17px 3px 3px;
    border: 1px solid #d9d9d9;
}
.list {
    width: 100px;
    height: 336px;
    padding: 2px 0 0 5px;
    border: 1px solid #828790;
    background:
        linear-gradient(#ececec, #ececec) 81px 0 / 1px 100% no-repeat,
        repeating-linear-gradient(transparent 0 18px, #ececec 18px 19px) 0 25px / 94px 310px no-repeat #fff;
}
.list-head {
    padding-left: 2px;
    background: #fff;
    margin-right: 14px;
}
.check {
    display: flex;
    align-items: center;
    gap: 5px;
    white-space: nowrap;
}
.list .check {
    margin-top: 2px;
    background: #fff;
    margin-right: 14px;
    line-height: 19px;
}
.check input {
    appearance: none;
    width: 16px;
    height: 16px;
    border: 1px solid #333;
    background: #fff;
    position: relative;
}
.check input:checked::after {
    content: "";
    position: absolute;
    left: 4px;
    top: 0;
    width: 5px;
    height: 10px;
    border: solid #333;
    border-width: 0 1px 1px 0;
    transform: rotate(40deg);
}
.sheet {
    flex: 1;
    height: 333px;
    background: #35357d;
    border: 1px solid #777;
    border-right-color: #fff;
    border-bottom-color: #fff;
}
table {
    width: 681px;
    table-layout: fixed;
    border-collapse: collapse;
}
.c1 {
    width: 60px;
}
.c2 {
    width: 80px;
}
.c3 {
    width: 141px;
}
tr {
    height: 28px;
}
thead tr {
    height: 31px;
}
th, td {
    padding: 0 4px;
    font-weight: normal;
    white-space: nowrap;
    border: 1px solid #b3b3a0;
    background: #ffffdf;
    overflow: hidden;
}
th {
    background: #eeeeee;
    border-color: #777;
    text-align: left;
}
th div, td div {
    display: flex;
    justify-content: center;
    overflow: hidden;
}
thead th {
    border-top: none;
}
.dialog footer {
    display: flex;
    align-items: center;
    height: 28px;
    padding-left: 18px;
}
.dialog footer button {
    width: 52px;
    height: 28px;
    padding-bottom: 1px;
    background: #e1e1e1;
    border: 1px solid #adadad;
    margin-left: 8px;
}
.dialog footer .wide {
    width: 114px;
    margin-left: 29px;
}
.invert {
    margin-left: 24px;
}
.hint {
    flex: 1;
    margin-left: 7px;
    color: #b02020;
}
.dialog footer .default {
    border: 2px solid #1f6fb5;
}
.as-block {
    margin-left: 13px;
}
.scale {
    display: flex;
    align-items: center;
    margin-left: 28px;
}
.scale input {
    width: 40px;
    height: 27px;
    margin-left: 29px;
    padding: 0 3px 3px;
    background: #fff;
    border: 1px solid #777;
}
.dialog footer .hover {
    position: relative;
    margin-left: 15px;
    background: #e5f1fb;
    border-color: #2f75ae;
}
.pointer {
    position: absolute;
    left: 28px;
    top: 6px;
    width: 14px;
    height: 20px;
}
.dialog footer .exit {
    margin: 0 29px 0 32px;
}

/* command line */
.command {
    position: absolute;
    left: 297px;
    right: 298px;
    bottom: 1px;
    height: 33px;
    display: flex;
    align-items: center;
    background: #222932;
    border-radius: 3px;
}
.command .grip {
    width: 8px;
    height: 24px;
    margin: 0 4px;
    fill: none;
    stroke: #a5aab0;
    stroke-width: 2;
    stroke-dasharray: 2 2;
}
.command button {
    height: 20px;
    margin-right: 13px;
}
.command button svg {
    width: 14px;
    height: 14px;
    fill: none;
}
.command .wrench {
    width: 20px;
    height: 20px;
}
.command button + button {
    margin: 0 6px 0 0;
}
.prompt {
    flex: 1;
    display: flex;
    align-items: center;
    height: 33px;
    padding: 0 5px;
    background: #afafaf;
    border-radius: 3px;
}
.prompt svg {
    width: 20px;
    height: 16px;
    margin-right: 2px;
}
.prompt .caret {
    border-width: 5px;
    border-bottom: none;
    border-top: 6px solid #444;
}
.prompt .caret.up {
    border-top: none;
    border-bottom: 6px solid #444;
}
.prompt input {
    flex: 1;
    margin-left: 9px;
    font-size: 16px;
    font-style: italic;
}
.prompt input::placeholder {
    color: #555;
}

/* sheet and layout tabs */
.sheet-tabs {
    flex: none;
    height: 20px;
    border-top: 1px solid #fff;
    box-shadow: inset 0 1px 0 #000;
    background: #eeeeee;
    color: #222;
    font-family: "Liberation Sans", sans-serif;
    font-size: 10px;
    position: relative;
    padding-left: 16px;
}
.sheet-tabs svg {
    position: absolute;
    left: 0;
    top: 0;
    width: 90px;
    height: 19px;
}
.layout-tabs {
    flex: none;
    height: 27px;
    display: flex;
    align-items: flex-start;
    gap: 8px;
    color: #9299a2;
}
.layout-tabs a {
    width: 70px;
    height: 23px;
    margin-left: -9px;
    background: #2c343f;
    border-radius: 0 0 14px 0;
    line-height: 23px;
    font-size: 16px;
}
.layout-tabs button {
    width: 26px;
    height: 23px;
    background: #2c343f;
    border-radius: 8px 4px 12px 8px;
    font-size: 20px;
    font-weight: bold;
}

/* status bar */
.status {
    flex: none;
    height: 32px;
    padding: 0 0 2px 75px;
    display: flex;
    gap: 1px;
    color: #f0f1f3;
}
.status > * {
    display: flex;
    align-items: center;
    justify-content: center;
    flex: none;
    background: #3a4150;
    white-space: nowrap;
}
.status svg {
    width: 20px;
    height: 20px;
    fill: none;
    stroke: #d5d8dc;
}
.status .app {
    width: 148px;
    font-weight: 500;
}
.status .coords {
    width: 305px;
    padding-left: 19px;
    justify-content: flex-start;
    overflow: hidden;
}
.status .toggles {
    flex: 1;
    justify-content: flex-start;
    padding-left: 4px;
}
.lit {
    height: 30px;
    background: #4b82b8;
}
.lit.one {
    width: 59px;
    margin-left: 246px;
}
.lit.two {
    width: 58px;
    margin-left: 253px;
}
.status .person {
    width: 24px;
    height: 30px;
    margin-left: -14px;
}
.toggles .last {
    margin: 0 6px 0 auto;
}
.status .plus {
    width: 30px;
}
.status .units {
    width: 121px;
    margin-left: 3px;
    padding-left: 9px;
}
.status .units svg {
    width: 12px;
    margin-right: 16px;
}
.units .drop {
    background: none;
    border: none;
}
.units select {
    color: #f0f1f3;
    font-weight: bold;
}
.status button {
    width: 30px;
}
.status .lock {
    width: 50px;
    margin-left: 2px;
    gap: 10px;
}
.status .globe {
    width: 38px;
    margin-left: 2px;
    justify-content: flex-start;
    padding-left: 6px;
}
.status .globe svg {
    width: 24px;
    height: 24px;
}

/* taskbar */
.taskbar {
    flex: none;
    height: 50px;
    display: flex;
    align-items: center;
    background: #d6d6d8;
    color: #151515;
}
.app-icon {
    margin-left: -17px;
}
.app-icon svg {
    display: block;
    width: 30px;
    height: 30px;
}
.folder {
    margin: 0 18px 0 33px;
}
.folder svg {
    display: block;
    width: 28px;
    height: 24px;
}
.task {
    display: flex;
    align-items: center;
    gap: 3px;
    width: 190px;
    height: 50px;
    margin-left: 5px;
    padding-left: 8px;
    border-bottom: 3px solid #1c74bb;
}
.task.active {
    width: 200px;
    margin-left: 0;
    padding-left: 14px;
    background: #efefef;
}
.task svg {
    width: 30px;
    height: 30px;
}
.tray {
    display: flex;
    gap: 10px;
    margin-left: auto;
    margin-right: 25px;
}
.tray svg {
    width: 20px;
    height: 20px;
    fill: none;
    stroke: #222;
}
.tray span {
    width: 20px;
    font-size: 20px;
    color: #555;
}
.tray .sogou {
    margin-left: 5px;
}

.subtitle {
    position: absolute;
    left: 0;
    right: 0;
    bottom: 24px;
    margin: 0;
    font-family: "Noto Sans CJK SC", sans-serif;
    font-size: 69px;
    font-weight: 400;
    line-height: 80px;
    text-align: center;
    white-space: nowrap;
    color: #fff;
    -webkit-text-stroke: 10px #000;
    paint-order: stroke fill;
    pointer-events: none;
}
```
